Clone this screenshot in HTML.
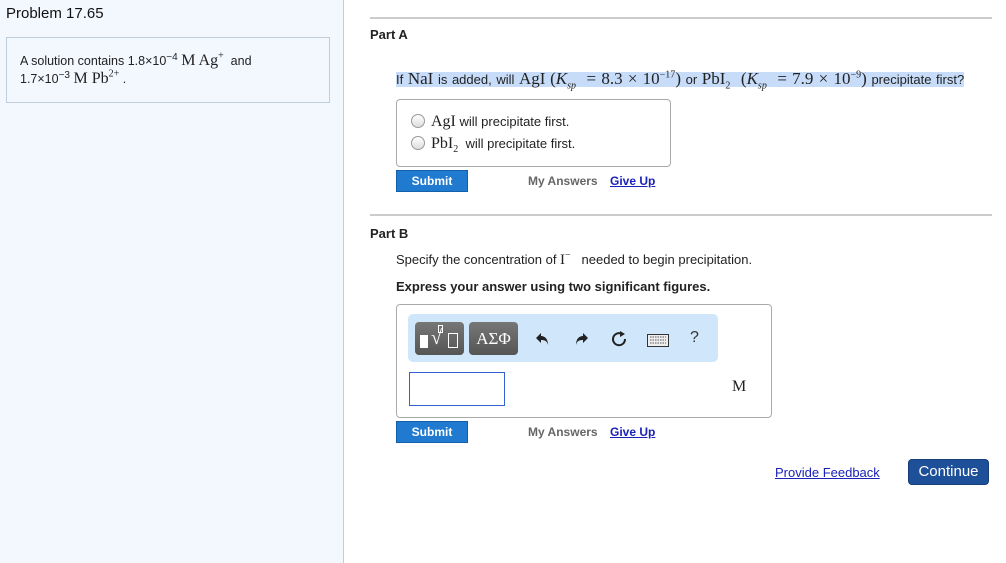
<!DOCTYPE html>
<html><head><meta charset="utf-8"><style>
*{margin:0;padding:0;box-sizing:border-box}
body{width:1006px;height:563px;background:#fff;font-family:"Liberation Sans",Arial,sans-serif;color:#222;position:relative;overflow:hidden;font-size:13px}
.abs{position:absolute;white-space:nowrap}
.left{left:0;top:0;width:344px;height:563px;background:#f3f7fe;border-right:1px solid #bfcddd}
.serif{font-family:"Liberation Serif",serif}
.hl{background:#c7dcf8}
sup,sub{font-size:10px;line-height:0}
.btn{background:#1f7ad0;color:#fff;font-weight:bold;font-size:12px;text-align:center;border:1px solid #1361aa}
a{color:#1a22b8;text-decoration:underline;font-weight:bold}
.radio{display:inline-block;width:14px;height:14px;border:1px solid #999;border-radius:50%;background:linear-gradient(#fff,#ddd);vertical-align:-2px;margin-right:6px}
.tb{background:linear-gradient(#777,#555);border-radius:4px;color:#fff}
</style></head><body>
<div class="abs left"></div>
<div class="abs" style="left:6px;top:5px;font-size:15px;color:#111">Problem 17.65</div>
<div class="abs" style="left:6px;top:37px;width:324px;height:66px;border:1px solid #bfcddd"></div>
<div class="abs" style="left:20px;top:52px;line-height:18px;font-size:12.5px">A solution contains 1.8×10<sup>−4</sup> <span class="serif" style="font-size:16px">M Ag<sup>+</sup></span>&nbsp; and<br>1.7×10<sup>−3</sup> <span class="serif" style="font-size:16px">M Pb<sup>2+</sup></span> .</div>

<div class="abs" style="left:370px;top:17px;width:622px;height:2px;background:#ccc"></div>
<div class="abs" style="left:370px;top:27px;font-weight:bold;font-size:13px">Part A</div>
<div class="abs" style="left:396px;top:68px;height:22px;line-height:22px;font-size:13px;word-spacing:1px"><span class="hl">If <span class="serif" style="font-size:17px">NaI</span> is added, will <span class="serif" style="font-size:17px">AgI</span> <span class="serif" style="font-size:17px">(<i>K</i><sub><i>sp</i></sub> &nbsp;= 8.3 × 10<sup>−17</sup>)</span> or <span class="serif" style="font-size:17px">PbI<sub>2</sub> &nbsp;(<i>K</i><sub><i>sp</i></sub> &nbsp;= 7.9 × 10<sup>−9</sup>)</span> precipitate first?</span></div>
<div class="abs" style="left:396px;top:99px;width:275px;height:68px;border:1px solid #aaa;border-radius:4px"></div>
<div class="abs" style="left:411px;top:113px;font-size:13px"><span class="radio"></span><span class="serif" style="font-size:16px">AgI</span> will precipitate first.</div>
<div class="abs" style="left:411px;top:135px;font-size:13px"><span class="radio"></span><span class="serif" style="font-size:16px">PbI<sub>2</sub></span>&nbsp; will precipitate first.</div>
<div class="abs btn" style="left:396px;top:170px;width:72px;height:22px;line-height:20px">Submit</div>
<div class="abs" style="left:528px;top:174px;font-weight:bold;color:#666;font-size:12px">My Answers</div>
<a class="abs" style="left:610px;top:174px;font-size:12px">Give Up</a>

<div class="abs" style="left:370px;top:214px;width:622px;height:2px;background:#ccc"></div>
<div class="abs" style="left:370px;top:226px;font-weight:bold;font-size:13px">Part B</div>
<div class="abs" style="left:396px;top:252px">Specify the concentration of <span class="serif" style="font-size:15px">I<sup>−</sup></span>&nbsp;&nbsp; needed to begin precipitation.</div>
<div class="abs" style="left:396px;top:279px;font-weight:bold">Express your answer using two significant figures.</div>
<div class="abs" style="left:396px;top:304px;width:376px;height:114px;border:1px solid #aaa;border-radius:4px"></div>
<div class="abs" style="left:408px;top:314px;width:310px;height:48px;background:#cfe6fb;border-radius:5px"></div>
<div class="abs tb" style="left:415px;top:322px;width:49px;height:33px">
<div class="abs" style="left:5px;top:13px;width:8px;height:13px;background:#fff"></div>
<div class="abs serif" style="left:16px;top:5px;font-size:20px;color:#fff">√</div>
<div class="abs" style="left:33px;top:11px;width:10px;height:15px;border:1px solid #fff"></div>
<div class="abs" style="left:23px;top:3px;width:5px;height:8px;border:1px solid #fff"></div>
</div>
<div class="abs tb serif" style="left:469px;top:322px;width:49px;height:33px;line-height:33px;text-align:center;font-size:17px">ΑΣΦ</div>
<svg class="abs" style="left:535px;top:331px" width="16" height="16" viewBox="0 0 16 16"><path d="M6 2 L1 7 L6 12 V9 C10 9 12 10 13 14 C13 8 10 5 6 5 Z" fill="#222"/></svg>
<svg class="abs" style="left:573px;top:331px" width="16" height="16" viewBox="0 0 16 16"><path d="M10 2 L15 7 L10 12 V9 C6 9 4 10 3 14 C3 8 6 5 10 5 Z" fill="#222"/></svg>
<svg class="abs" style="left:610px;top:330px" width="18" height="18" viewBox="0 0 18 18"><path d="M12 4 A6 6 0 1 0 15 9" fill="none" stroke="#222" stroke-width="2"/><path d="M10 1 L15 4 L10 7 Z" fill="#222"/></svg>
<svg class="abs" style="left:647px;top:334px" width="22" height="14" viewBox="0 0 22 14"><rect x="0.5" y="0.5" width="21" height="12" fill="#eee" stroke="#333"/><path d="M3 3h16M3 6h16M3 9h16" stroke="#555" stroke-dasharray="1.5 1"/></svg>
<div class="abs" style="left:690px;top:329px;font-size:16px;color:#333">?</div>
<div class="abs" style="left:409px;top:372px;width:96px;height:34px;border:1px solid #3461d1"></div>
<div class="abs serif" style="left:732px;top:378px;font-size:16px">M</div>
<div class="abs btn" style="left:396px;top:421px;width:72px;height:22px;line-height:20px">Submit</div>
<div class="abs" style="left:528px;top:425px;font-weight:bold;color:#666;font-size:12px">My Answers</div>
<a class="abs" style="left:610px;top:425px;font-size:12px">Give Up</a>

<a class="abs" style="left:775px;top:465px;font-weight:normal;font-size:13px">Provide Feedback</a>
<div class="abs" style="left:908px;top:459px;width:81px;height:26px;background:#1e4f99;border:1px solid #163d78;border-radius:4px;color:#fff;font-size:15px;text-align:center;line-height:23px">Continue</div>
</body></html>
